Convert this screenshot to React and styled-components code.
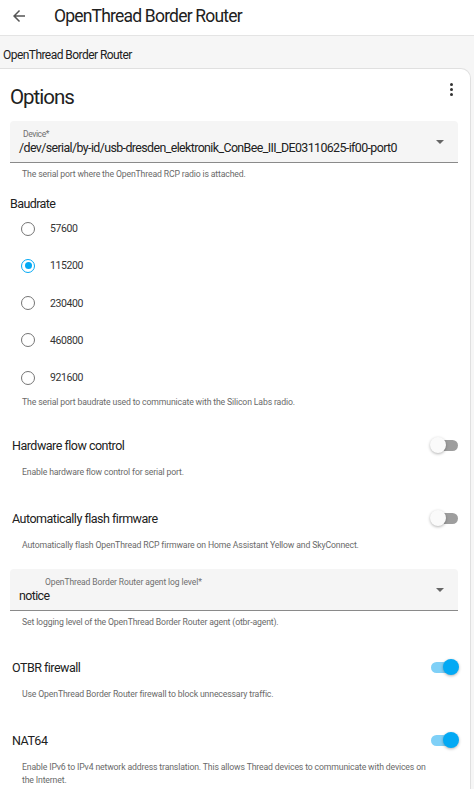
import React from 'react'
import styled, { createGlobalStyle } from 'styled-components'

const GlobalStyle = createGlobalStyle`
  html, body {
    margin: 0;
    padding: 0;
    background: #f6f6f6;
    font-family: Roboto, "Noto Sans", sans-serif;
    color: #212121;
  }
`

const Page = styled.div`
  width: 474px;
  height: 789px;
  overflow: hidden;
  background: #f6f6f6;
`

const TopBar = styled.header`
  height: 35px;
  background: #fff;
  border-bottom: 1px solid #e4e4e4;
  display: flex;
  align-items: center;
  padding-left: 10px;
  gap: 26px;

  .title{
    font-size: 17.5px;
    letter-spacing: -0.8px;
    color: #212121;
    margin-top: -3px;
  }
`

const BackIcon = styled.svg`
  width: 18px;
  height: 18px;
  margin-top: -4px;
`

const SubTitle = styled.div`
  font-size: 12px;
  letter-spacing: -0.55px;
  padding: 12px 3px 0;
  height: 20px;
  color: #212121;
`

const Card = styled.section`
  background: #fff;
  margin-right: 3px;
  border: 1px solid #e0e0e0;
  border-left: none;
  border-radius: 0 10px 0 0;
  padding: 0 12px 0 10px;
  height: 740px;
`

const CardHead = styled.div`
  display: flex;
  justify-content: space-between;
  align-items: flex-start;
  height: 52px;

  h1{
    margin: 16px 0 0;
    font-size: 20.5px;
    letter-spacing: -1px;
    font-weight: 400;
    color: #212121;
  }
`

const Kebab = styled.div`
  display: flex;
  flex-direction: column;
  gap: 2px;
  margin-top: 14px;
  margin-right: 5px;

  span{
    width: 3px;
    height: 3px;
    background: #333;
    border-radius: 50%;
  }
`

const Select = styled.div`
  background: #f5f5f5;
  border-bottom: 1px solid #8a8a8a;
  border-radius: 4px 4px 0 0;
  height: 42px;
  margin-top: ${p => p.$top || 0}px;
  display: flex;
  align-items: center;
  justify-content: space-between;
  padding: 0 14px 0 9px;
  box-sizing: border-box;

  .label{
    font-size: 8.5px;
    letter-spacing: ${p => p.$labelSpacing}px;
    color: #6f6f6f;
    padding-left: ${p => p.$labelIndent}px;
    margin-top: 1px;
  }
  .value{
    font-size: 12.4px;
    letter-spacing: -0.6px;
    white-space: nowrap;
    color: #212121;
    line-height: 17px;
  }
`

const Caret = styled.div`
  width: 0;
  height: 0;
  border-left: 4px solid transparent;
  border-right: 4px solid transparent;
  border-top: 4px solid #666;
`

const Helper = styled.p`
  margin: 0;
  padding: ${p => p.$pad || '5px 0 0 12px'};
  padding-right: 28px;
  font-size: 8.7px;
  letter-spacing: -0.15px;
  line-height: 13px;
  color: #6a6a6a;
`

const SectionLabel = styled.div`
  font-size: 12.5px;
  letter-spacing: -0.6px;
  margin-top: ${p => p.$top || 0}px;
  color: #212121;
`

const RadioList = styled.div`
  display: flex;
  flex-direction: column;
  margin-top: -1px;
`

const RadioRow = styled.label`
  display: flex;
  align-items: center;
  height: 37.25px;
  gap: 15px;
  padding-left: 11px;
  font-size: 10.5px;
  letter-spacing: -0.4px;
  color: #333;
`

const RadioCircle = styled.span`
  width: 14px;
  height: 14px;
  border-radius: 50%;
  box-sizing: border-box;
  border: 1.5px solid ${p => (p.$on ? '#03a9f4' : '#757575')};
  display: flex;
  align-items: center;
  justify-content: center;

  &::after{
    content: '';
    width: 7px;
    height: 7px;
    border-radius: 50%;
    background: ${p => (p.$on ? '#03a9f4' : 'transparent')};
  }
`

const ToggleRow = styled.div`
  display: flex;
  align-items: center;
  justify-content: space-between;
  margin-top: ${p => p.$top}px;
  padding-left: 2px;
  height: 20px;

  .name{
    font-size: 12.5px;
    letter-spacing: -0.5px;
    color: #212121;
  }
`

const Switch = styled.div`
  position: relative;
  width: 27px;
  height: 11px;
  border-radius: 6px;
  background: ${p => (p.$on ? '#7fd0f7' : '#9e9e9e')};

  &::after{
    content: '';
    position: absolute;
    top: -3px;
    left: ${p => (p.$on ? '12px' : '-1px')};
    width: 16px;
    height: 16px;
    border-radius: 50%;
    background: ${p => (p.$on ? '#03a9f4' : '#fafafa')};
    box-shadow: 0 1px 3px rgba(0,0,0,0.3);
  }
`

const bauds = ['57600', '115200', '230400', '460800', '921600']

export default function App() {
  return (
    <Page>
      <GlobalStyle />
      <TopBar>
        <BackIcon viewBox="0 0 24 24">
          <path d="M20 11H7.83l5.59-5.59L12 4l-8 8 8 8 1.41-1.41L7.83 13H20v-2z" fill="#555" />
        </BackIcon>
        <span className="title">OpenThread Border Router</span>
      </TopBar>
      <SubTitle>OpenThread Border Router</SubTitle>
      <Card>
        <CardHead>
          <h1>Options</h1>
          <Kebab><span /><span /><span /></Kebab>
        </CardHead>

        <Select $labelIndent={4} $labelSpacing={-0.4}>
          <div>
            <div className="label">Device*</div>
            <div className="value">/dev/serial/by-id/usb-dresden_elektronik_ConBee_III_DE03110625-if00-port0</div>
          </div>
          <Caret />
        </Select>
        <Helper>The serial port where the OpenThread RCP radio is attached.</Helper>

        <SectionLabel $top={15}>Baudrate</SectionLabel>
        <RadioList>
          {bauds.map(b => (
            <RadioRow key={b}>
              <RadioCircle $on={b === '115200'} />
              {b}
            </RadioRow>
          ))}
        </RadioList>
        <Helper $pad="0 0 0 12px">The serial port baudrate used to communicate with the Silicon Labs radio.</Helper>

        <ToggleRow $top={26}>
          <span className="name">Hardware flow control</span>
          <Switch />
        </ToggleRow>
        <Helper $pad="11px 0 0 12px">Enable hardware flow control for serial port.</Helper>

        <ToggleRow $top={29}>
          <span className="name">Automatically flash firmware</span>
          <Switch />
        </ToggleRow>
        <Helper $pad="11px 0 0 12px">Automatically flash OpenThread RCP firmware on Home Assistant Yellow and SkyConnect.</Helper>

        <Select $labelIndent={26} $labelSpacing={-0.1} $top={17}>
          <div>
            <div className="label">OpenThread Border Router agent log level*</div>
            <div className="value">notice</div>
          </div>
          <Caret />
        </Select>
        <Helper>Set logging level of the OpenThread Border Router agent (otbr-agent).</Helper>

        <ToggleRow $top={28}>
          <span className="name">OTBR firewall</span>
          <Switch $on />
        </ToggleRow>
        <Helper $pad="11px 0 0 12px">Use OpenThread Border Router firewall to block unnecessary traffic.</Helper>

        <ToggleRow $top={29}>
          <span className="name">NAT64</span>
          <Switch $on />
        </ToggleRow>
        <Helper $pad="11px 0 0 12px">Enable IPv6 to IPv4 network address translation. This allows Thread devices to communicate with devices on the Internet.</Helper>
      </Card>
    </Page>
  )
}
